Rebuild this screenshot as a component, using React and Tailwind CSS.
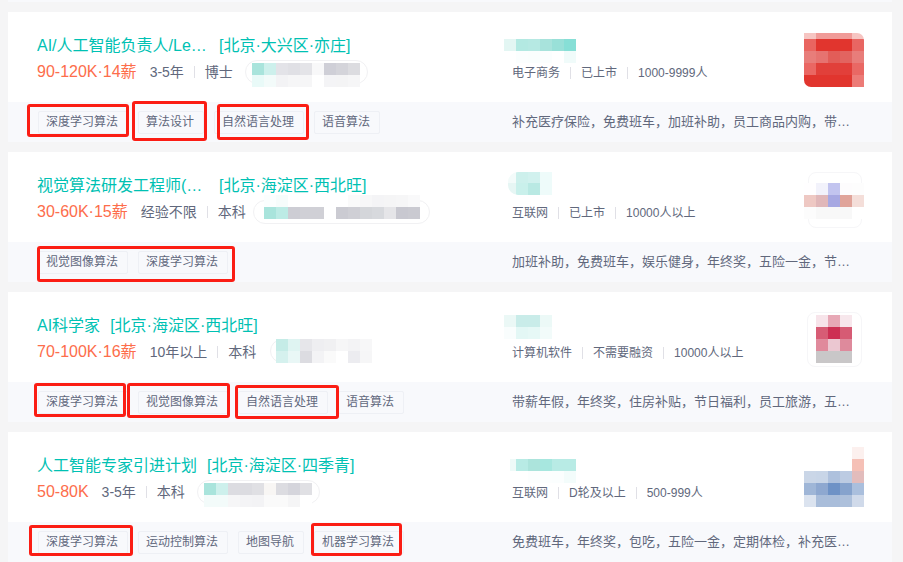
const font = { fontFamily: '"Liberation Sans", "Noto Sans CJK SC", sans-serif' }

const jobs = [
  {
    title: 'AI/人工智能负责人/Leader',
    place: '[北京·大兴区·亦庄]',
    salary: '90-120K·14薪',
    exp: '3-5年',
    edu: '博士',
    tags: ['深度学习算法', '算法设计', '自然语言处理', '语音算法'],
    info: ['电子商务', '已上市', '1000-9999人'],
    perks: '补充医疗保险，免费班车，加班补助，员工商品内购，带薪年假，年终奖',
    pill: 'ml-[12px] w-[123px]',
    pillPatch: 'left-[6px] top-[2px]',
    pillRows: [
      ['#a9e4dc', '#cdf0ec', '#e3e3e8', '#e0e0e5', '#e4e4e8', '#f8f8f9', '#cfcfd7', '#d4d4da', '#dcdce0'],
      ['#e9faf8', '#f3fbfa', '#f3f3f5', '#f6f6f7', '#f6f6f7', '#ffffff', '#f4f4f6', '#f4f4f5', '#f6f6f7'],
    ],
    company: '-ml-2 mt-[27px]',
    companyRows: [
      ['#e3f6f3', '#b3e9e2', '#b6e9e3', '#a8e3dc', '#99e0d8', '#87dfd6'],
      ['#ffffff', '#fbfefe', '#fafefd', '#fbfefe', '#ffffff', '#f0fbfa'],
    ],
    logo: 'mt-[15px] [clip-path:inset(6px_0_0_0_round_0_7px_0_7px)]',
    logoRows: [
      ['#f6c5c2', '#f09b98', '#f09b98', '#f09b98', '#f6c5c2'],
      ['#e96560', '#e1352e', '#e1352e', '#e1352e', '#e86662'],
      ['#e87d7a', '#e67370', '#e25d58', '#e26460', '#e87d7a'],
      ['#ea6763', '#e1403a', '#e1403a', '#e23f3a', '#e96864'],
      ['#e1352e', '#e1352e', '#e1352e', '#e1352e', '#ec7b77'],
    ],
  },
  {
    title: '视觉算法研发工程师(校招)',
    place: '[北京·海淀区·西北旺]',
    salary: '30-60K·15薪',
    exp: '经验不限',
    edu: '本科',
    tags: ['视觉图像算法', '深度学习算法'],
    info: ['互联网', '已上市', '10000人以上'],
    perks: '加班补助，免费班车，娱乐健身，年终奖，五险一金，节日福利，带薪年假',
    pill: 'ml-[7px] w-[177px]',
    pillPatch: 'left-[10px] top-[-6px]',
    pillRows: [
      ['#fbfefe', '#f6fcfb', '#ffffff', '#ffffff', '#ffffff', '#ffffff', '#ffffff', '#fafafa', '#f7f7f8', '#f4f4f6', '#f5f5f6', '#f6f6f7', '#f9f9fa'],
      ['#a9e4dc', '#bcebe5', '#cdcdd4', '#d0d0d6', '#d0d0d6', '#ffffff', '#cbcbd2', '#cfcfd5', '#d4d6da', '#d7d9dd', '#e5e5e8', '#c8c8d0', '#cacad1'],
    ],
    company: '-ml-2 mt-[19px] [clip-path:inset(1px_0_0_4px_round_10px_0_0_10px)]',
    companyRows: [
      ['#f3fbfa', '#cdf0ec', '#d1f1ee', '#eefbfa'],
      ['#e6f6f4', '#c9f0eb', '#b9e9e3', '#eefbfa'],
    ],
    frame: 'ml-1 h-[56px] w-[54px]',
    logo: 'absolute left-[-5px] top-[10px]',
    logoRows: [
      ['#fffeff', '#f2f2fb', '#c2c4ef', '#fdfcfd', '#fdfdfd'],
      ['#eec8c3', '#e0b7b9', '#a7a8e2', '#e0a49a', '#f4ded9'],
      ['#fcfcfc', '#f8f8f8', '#f8f8f8', '#f8f8f8', '#ffffff'],
    ],
  },
  {
    title: 'AI科学家',
    place: '[北京·海淀区·西北旺]',
    salary: '70-100K·16薪',
    exp: '10年以上',
    edu: '本科',
    tags: ['深度学习算法', '视觉图像算法', '自然语言处理', '语音算法'],
    info: ['计算机软件', '不需要融资', '10000人以上'],
    perks: '带薪年假，年终奖，住房补贴，节日福利，员工旅游，五险一金，定期体检',
    pill: 'ml-[14px] -mt-[2px] w-[102px]',
    pillPatch: 'left-[5px] top-[-1px]',
    pillRows: [
      ['#c5ece7', '#dff4f2', '#e6e6ea', '#eeeef1', '#f0f0f2', '#f6f6f7', '#f3f3f5', '#f7f7f8'],
      ['#d5f1ee', '#e9f7f6', '#dcdce1', '#f3f3f5', '#fafafa', '#ffffff', '#ececf0', '#f6f6f7'],
    ],
    company: '-ml-2 mt-[23px]',
    companyRows: [
      ['#ebf8f6', '#c9ece9', '#c9ece9', '#ecf9f7'],
      ['#f9fdfd', '#e3f7f5', '#e6f8f6', '#f2fbfa'],
    ],
    frame: 'ml-[3px] h-[55px] w-[55px]',
    logo: 'absolute left-[8px] top-[2px]',
    logoRows: [
      ['#f7e4ea', '#e7a8b6', '#f7e7ec'],
      ['#d75c75', '#cd2f53', '#d65b74'],
      ['#e08a9c', '#ebc7d1', '#de8a9c'],
      ['#c9c7c8', '#c9c7c8', '#c9c7c8'],
    ],
  },
  {
    title: '人工智能专家引进计划',
    place: '[北京·海淀区·四季青]',
    salary: '50-80K',
    exp: '3-5年',
    edu: '本科',
    tags: ['深度学习算法', '运动控制算法', '地图导航', '机器学习算法'],
    info: ['互联网', 'D轮及以上', '500-999人'],
    perks: '免费班车，年终奖，包吃，五险一金，定期体检，补充医疗保险，带薪年假',
    pill: 'ml-[12px] w-[123px]',
    pillPatch: 'left-[6px] top-[2px]',
    pillRows: [
      ['#a9e4dc', '#cdf0ec', '#dcdce1', '#dcdce1', '#e0e0e4', '#f8f6f4', '#dcdce1', '#d5d5dc', '#e0e0e4'],
      ['#f3fbfa', '#f3fbfa', '#f6f6f7', '#f4f4f6', '#f3f3f5', '#fafafa', '#fafafa', '#f5f5f6', '#ffffff'],
    ],
    company: '-ml-2 mt-[27px] [clip-path:inset(0_0_0_6px)]',
    companyRows: [
      ['#eefaf8', '#b8ebe5', '#ace4dc', '#a7e7df', '#b8ebe5', '#b8ebe5'],
      ['#ffffff', '#ffffff', '#fcfefe', '#fcfefe', '#fbfefe', '#f3fcfb'],
    ],
    logo: 'mt-[15px]',
    logoRows: [
      ['none', 'none', 'none', 'none', '#fcf0ee'],
      ['none', 'none', 'none', 'none', '#f5c0b6'],
      ['#cad6e7', '#c8d5e7', '#aec1dd', '#bccbe2', '#e2bcbc'],
      ['#9fb6d7', '#8ea8d0', '#6e92c6', '#86a3cd', '#aabfdd'],
      ['#dbe3ef', '#a9bdda', '#a9bdda', '#adc0db', '#d0daea'],
    ],
  },
]

function Sep({ className }) {
  return <span className={`h-3 w-px bg-[#e0e0e6] ${className}`} />
}

// pixelated (censored) patches, drawn as picture
function Mosaic({ className, rows }) {
  const w = Math.max(...rows.map((r) => r.length)) * 12
  return (
    <svg className={`block ${className}`} width={w} height={rows.length * 12} shapeRendering="crispEdges">
      {rows.map((r, y) => r.map((c, x) => <rect key={x} x={x * 12} y={y * 12} width="12" height="12" fill={c} />))}
    </svg>
  )
}

function Card({ job }) {
  const logo = <Mosaic className={job.logo} rows={job.logoRows} />
  return (
    <section className="h-[130px] shrink-0">
      <div className="flex h-[90px] bg-white">
        <div className="w-[504px] pl-[29px] pt-[22px]">
          <div className="flex h-[22px] items-center pt-px text-base text-[#00c1b3]">
            <span className="max-w-[172px] truncate">{job.title}</span>
            <span className="ml-[10px] whitespace-nowrap">{job.place}</span>
          </div>
          <div className="mt-[5px] flex h-[22px] items-center text-sm text-[#61687c]">
            <span className="mr-[13px] text-base text-[#fd6d4b]">{job.salary}</span>
            <span>{job.exp}</span>
            <Sep className="mx-[10px]" />
            <span>{job.edu}</span>
            <div className={`relative h-6 shrink-0 rounded-full border border-[#f1f1f3] ${job.pill}`}>
              <Mosaic className={`absolute ${job.pillPatch}`} rows={job.pillRows} />
            </div>
          </div>
        </div>
        <div className="w-[292px]">
          <div className="flow-root h-[50px]">
            <Mosaic className={job.company} rows={job.companyRows} />
          </div>
          <div className="flex h-[22px] items-center text-xs text-[#61687c]">
            {job.info.map((t, i) => (
              <span key={t} className="flex items-center whitespace-nowrap">
                {i > 0 && <Sep className="mx-[10px]" />}
                {t}
              </span>
            ))}
          </div>
        </div>
        <div className="flow-root w-[60px]">
          {job.frame
            ? <div className={`relative mt-5 rounded-lg border border-[#f6f6f8] ${job.frame}`}>{logo}</div>
            : logo}
        </div>
      </div>
      <div className="flex h-10 bg-[#f8f9fc]">
        <div className="flex w-[504px] gap-[10px] pl-[30px] pt-[9px]">
          {job.tags.map((t) => (
            <span key={t} className="flex h-[23px] items-center rounded-[2px] border border-[#eef0f5] bg-[#f8f9fc] pb-[2px] pl-[7px] pr-[9px] text-xs whitespace-nowrap text-[#61687c]">{t}</span>
          ))}
        </div>
        <p className="w-[340px] truncate text-[13px] leading-10 text-[#61687c]">{job.perks}</p>
      </div>
    </section>
  )
}

function Mark({ className }) {
  return <div className={`absolute rounded-[3px] border-[3px] border-[#fb1d14] ${className}`} />
}

export default function App() {
  return (
    <div className="relative h-[562px] w-[903px] overflow-hidden bg-[#f5f5f6]" style={font}>
      <div className="flex w-[892px] flex-col gap-[10px] pl-2">
        <div className="h-[2px] shrink-0 bg-[#f8f9fc]" />
        {jobs.map((j) => <Card key={j.title} job={j} />)}
      </div>

      {/* hand-drawn red marks on top of the shot */}
      <Mark className="left-[27px] top-[104px] h-[33px] w-[102px]" />
      <Mark className="left-[132px] top-[101px] h-[40px] w-[75px]" />
      <Mark className="left-[217px] top-[104px] h-[36px] w-[92px]" />
      <Mark className="left-[37px] top-[246px] h-[36px] w-[198px]" />
      <Mark className="left-[34px] top-[383px] h-[34px] w-[92px]" />
      <Mark className="left-[127px] top-[383px] h-[35px] w-[103px]" />
      <Mark className="left-[235px] top-[385px] h-[34px] w-[104px]" />
      <Mark className="left-[29px] top-[525px] h-[31px] w-[104px]" />
      <Mark className="left-[311px] top-[523px] h-[33px] w-[91px]" />
    </div>
  )
}
